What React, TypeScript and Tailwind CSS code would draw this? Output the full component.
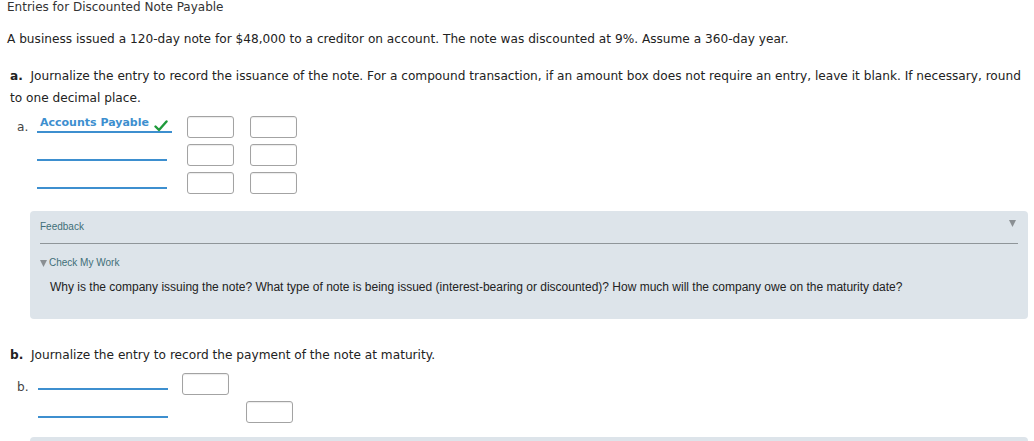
import React from "react"

const Box = () => (
  <div className="h-[22px] w-[47px] rounded-[3px] border border-[#a3a3a3] bg-white shadow-[inset_0_1px_1px_rgba(0,0,0,0.08)]" />
)

const Line = ({ w = "w-[130px]", children }: { w?: string; children?: React.ReactNode }) => (
  <div className={`${w} h-[17px] border-b-2 border-[#3d8fcf] flex items-end pl-[3px] pb-[1px] whitespace-nowrap`}>
    {children}
  </div>
)

const Check = () => (
  <svg width="14" height="12" viewBox="0 0 14 12" className="ml-[5px] mb-[-2px] shrink-0">
    <path d="M1.5 6.5 L5 10 L12.5 1.5" fill="none" stroke="#1e9a3a" strokeWidth="2.4" strokeLinecap="round" strokeLinejoin="round" />
  </svg>
)

const Tri = () => (
  <svg width="7" height="7" viewBox="0 0 7 7" className="inline-block">
    <path d="M0 0 H7 L3.5 7 Z" fill="#8a8f93" />
  </svg>
)

export default function App() {
  return (
    <div className="min-h-[441px] bg-white text-[#333] font-['DejaVu_Sans',Verdana,sans-serif] text-[12.15px] overflow-hidden">
      <div className="px-[7px] leading-[15px] text-[12px] text-[#333]">Entries for Discounted Note Payable</div>

      <p className="px-[7px] mt-[17px] leading-[15px] text-[#222]">
        A business issued a 120-day note for $48,000 to a creditor on account. The note was discounted at 9%. Assume a
        360-day year.
      </p>

      <p className="pl-[10px] pr-[2px] mt-[18px] leading-[22px] text-[#222]">
        <b>a.</b>&nbsp;&nbsp;Journalize the entry to record the issuance of the note. For a compound transaction, if an
        amount box does not require an entry, leave it blank. If necessary, round to one decimal place.
      </p>

      {/* part a entries */}
      <div className="mt-[7px] flex flex-col gap-[6px] pl-[17px]">
        <div className="flex items-start h-[22px]">
          <span className="w-[20px] text-[#444] pt-[4px] leading-[15px]">a.</span>
          <Line w="w-[135px]">
            <span className="font-bold text-[11px] text-[#3d8fcf] leading-[14px]">Accounts Payable</span>
            <Check />
          </Line>
          <div className="ml-[15px] flex gap-[16px]">
            <Box />
            <Box />
          </div>
        </div>
        <div className="flex items-start h-[22px]">
          <span className="w-[20px]" />
          <Line />
          <div className="ml-[20px] flex gap-[16px]">
            <Box />
            <Box />
          </div>
        </div>
        <div className="flex items-start h-[22px]">
          <span className="w-[20px]" />
          <Line />
          <div className="ml-[20px] flex gap-[16px]">
            <Box />
            <Box />
          </div>
        </div>
      </div>

      {/* feedback panel */}
      <div className="ml-[30px] mr-[6px] mt-[17px] rounded-[4px] bg-[#dde4ea] px-[10px] pt-[10px] pb-[25px] font-['Liberation_Sans',Arial,sans-serif]">
        <div className="flex items-center justify-between border-b border-[#8f9599] pb-[10px]">
          <span className="text-[10px] text-[#3f6f78] leading-[12px]">Feedback</span>
          <span className="mr-[2px] -mt-[9px] leading-none">
            <Tri />
          </span>
        </div>
        <div className="mt-[13px] text-[10px] leading-[12px] text-[#3f6f78] flex items-center gap-[2px]">
          <Tri />
          <span>Check My Work</span>
        </div>
        <p className="mt-[11px] ml-[10px] text-[12px] leading-[14px] text-[#222]">
          Why is the company issuing the note? What type of note is being issued (interest-bearing or discounted)? How much
          will the company owe on the maturity date?
        </p>
      </div>

      <p className="px-[10px] mt-[29px] leading-[15px] text-[#222]">
        <b>b.</b>&nbsp; Journalize the entry to record the payment of the note at maturity.
      </p>

      {/* part b entries */}
      <div className="mt-[10px] flex flex-col gap-[6px] pl-[17px]">
        <div className="flex items-start h-[22px]">
          <span className="w-[21px] text-[#444] pt-[7px] leading-[15px]">b.</span>
          <Line />
          <div className="ml-[14px]">
            <Box />
          </div>
        </div>
        <div className="flex items-start h-[22px]">
          <span className="w-[21px]" />
          <Line />
          <div className="ml-[78px]">
            <Box />
          </div>
        </div>
      </div>

      <div className="ml-[30px] mr-[6px] mt-[14px] h-[20px] rounded-[4px] bg-[#dde4ea]" />
    </div>
  )
}
